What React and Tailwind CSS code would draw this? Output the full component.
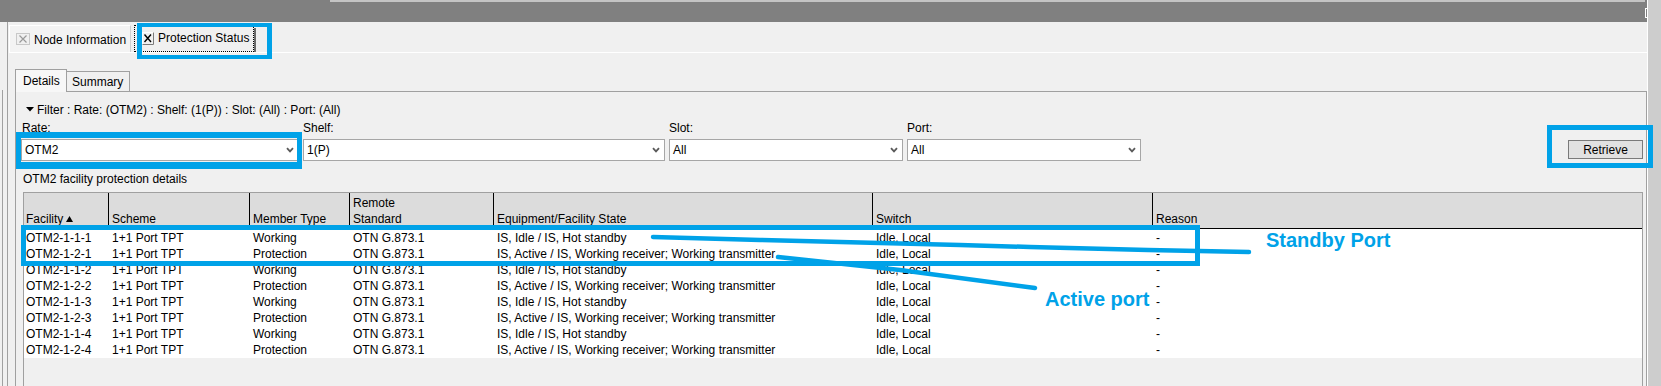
import React from "react";

const rows = [
  ["OTM2-1-1-1", "Working", "IS, Idle / IS, Hot standby"],
  ["OTM2-1-2-1", "Protection", "IS, Active / IS, Working receiver; Working transmitter"],
  ["OTM2-1-1-2", "Working", "IS, Idle / IS, Hot standby"],
  ["OTM2-1-2-2", "Protection", "IS, Active / IS, Working receiver; Working transmitter"],
  ["OTM2-1-1-3", "Working", "IS, Idle / IS, Hot standby"],
  ["OTM2-1-2-3", "Protection", "IS, Active / IS, Working receiver; Working transmitter"],
  ["OTM2-1-1-4", "Working", "IS, Idle / IS, Hot standby"],
  ["OTM2-1-2-4", "Protection", "IS, Active / IS, Working receiver; Working transmitter"],
];

const gridCols = "grid grid-cols-[85px_141px_100px_144px_379px_280px_1fr]";

function Chevron() {
  return (
    <svg width="8" height="6" viewBox="0 0 8 6">
      <path d="M1 1.2L4 4.4L7 1.2" fill="none" stroke="#5a5a5a" strokeWidth="1.8" />
    </svg>
  );
}

function Select({ value, width }) {
  return (
    <div className={`flex items-center h-[22px] bg-white border border-[#a6a6a6] pl-[3px] pr-[4px] ${width}`}>
      <span className="flex-1">{value}</span>
      <Chevron />
    </div>
  );
}

function Field({ label, value, width, labelPad }) {
  return (
    <div className="flex flex-col">
      <div className={`h-[14px] ${labelPad}`}>{label}</div>
      <div className="mt-[4px]">
        <Select value={value} width={width} />
      </div>
    </div>
  );
}

function HeadCell({ children, pad = "pl-[3px]" }) {
  return (
    <div className={`flex items-end border-r border-black h-full pb-[1px] leading-[16px] ${pad}`}>
      <div>{children}</div>
    </div>
  );
}

export default function App() {
  return (
    <div className="relative w-[1661px] h-[386px] overflow-hidden flex bg-[#f0f0f0] text-black text-[12px] leading-[14px] font-['Liberation_Sans',Arial,sans-serif]">
      <div className="flex-1 flex flex-col min-w-0">
        {/* top bar */}
        <div className="h-[22px] bg-[#808080] flex shrink-0">
          <div className="w-[330px]" />
          <div className="flex-1 h-[2px] bg-[#c4c4c4]" />
          <div className="w-[2px] h-[10px] mt-[8px] border-l border-y border-white" />
        </div>

        <div className="flex flex-1 min-h-0">
          {/* left gutter */}
          <div className="w-[9px] flex shrink-0">
            <div className="w-[2px]" />
            <div className="w-[1px] bg-[#a0a0a0] mt-[68px]" />
            <div className="w-[4px]" />
            <div className="w-[1px] bg-[#a0a0a0]" />
          </div>

          <div className="flex-1 flex flex-col min-w-0">
            {/* tab strip */}
            <div className="h-[31px] border-b border-white flex items-end shrink-0">
              <div className="h-[27px] w-[122px] flex items-center pl-[6px] gap-[4px] bg-[#f3f3f3] border-l border-t border-white border-r border-r-[#d0d0d0]">
                <svg width="14" height="12" viewBox="0 0 14 12">
                  <rect x="0.5" y="0.5" width="13" height="11" fill="#f0f0f0" stroke="#c8c8c8" />
                  <path d="M3.5 2.5L10.5 9.5M10.5 2.5L3.5 9.5" stroke="#9a9a9a" strokeWidth="1.2" />
                </svg>
                <span className="mt-[1px]">Node Information</span>
              </div>
              <div className="ml-[3px] h-[27px] w-[120px] flex items-center pl-[7px] gap-[4px] border border-dotted border-black">
                <svg width="12" height="13" viewBox="0 0 12 13">
                  <rect x="0.5" y="0.5" width="11" height="12" fill="#f0f0f0" stroke="#ffffff" />
                  <path d="M11.5 0.5V12.5H0.5" fill="none" stroke="#7a7a7a" />
                  <path d="M2.5 2.5L9 10M9 2.5L2.5 10" stroke="#000" strokeWidth="1.4" />
                </svg>
                <span className="-mt-[2px]">Protection Status</span>
              </div>
              <div className="w-[2px] h-[24px] bg-[#6a6a6a]" />
            </div>

            <div className="flex-1 flex flex-col pl-[6px] pt-[16px] min-h-0">
              {/* sub tabs */}
              <div className="flex items-end h-[22px] shrink-0">
                <div className="h-[23px] w-[52px] bg-[#f7f7f7] border-l border-t border-r border-[#a0a0a0] pl-[7px] pt-[4px] relative z-10 -mb-[1px]">
                  Details
                </div>
                <div className="h-[20px] w-[63px] border-t border-r border-[#a0a0a0] pl-[5px] pt-[3px]">
                  Summary
                </div>
              </div>

              {/* details panel */}
              <div className="flex-1 border-l border-t border-r border-[#a0a0a0] pl-[5px] pr-[3px] flex flex-col">
                <div className="mt-[11px] h-[14px] flex items-center">
                  <svg width="8" height="5" viewBox="0 0 8 5" className="ml-[5px] -mt-[1px]">
                    <path d="M0 0H8L4 4.5Z" fill="#000" />
                  </svg>
                  <span className="ml-[3px]">Filter : Rate: (OTM2) : Shelf: (1(P)) : Slot: (All) : Port: (All)</span>
                </div>

                <div className="mt-[4px] flex items-end">
                  <Field label="Rate:" value="OTM2" width="w-[278px]" labelPad="pl-[1px]" />
                  <div className="ml-[4px]">
                    <Field label="Shelf:" value="1(P)" width="w-[362px]" labelPad="" />
                  </div>
                  <div className="ml-[4px]">
                    <Field label="Slot:" value="All" width="w-[234px]" labelPad="" />
                  </div>
                  <div className="ml-[4px]">
                    <Field label="Port:" value="All" width="w-[234px]" labelPad="" />
                  </div>
                  <button className="ml-auto mb-[2px] w-[75px] h-[19px] bg-[#e1e1e1] border border-[#7a7a7a] text-[12px] leading-[16px]">
                    Retrieve
                  </button>
                </div>

                <div className="mt-[11px] h-[14px] pl-[2px]">OTM2 facility protection details</div>

                {/* table */}
                <div className="mt-[6px] ml-[2px] h-[230px] shrink-0 border border-[#a0a0a0] flex flex-col">
                  <div className={`${gridCols} h-[36px] bg-[#dcdcdc] border-b border-black`}>
                    <HeadCell pad="pl-[2px]">
                      <span className="flex items-center gap-[3px]">
                        Facility
                        <svg width="7" height="6" viewBox="0 0 7 6">
                          <path d="M3.5 0L7 6H0Z" fill="#000" />
                        </svg>
                      </span>
                    </HeadCell>
                    <HeadCell>Scheme</HeadCell>
                    <HeadCell>Member Type</HeadCell>
                    <HeadCell>
                      Remote
                      <br />
                      Standard
                    </HeadCell>
                    <HeadCell>Equipment/Facility State</HeadCell>
                    <HeadCell>Switch</HeadCell>
                    <div className="flex items-end pl-[3px] pb-[1px] leading-[16px]">Reason</div>
                  </div>
                  <div className="bg-white pt-[1px]">
                    {rows.map(([facility, member, state]) => (
                      <div key={facility} className={`${gridCols} h-[16px] leading-[16px]`}>
                        <div className="pl-[2px]">{facility}</div>
                        <div className="pl-[3px]">1+1 Port TPT</div>
                        <div className="pl-[3px]">{member}</div>
                        <div className="pl-[3px]">OTN G.873.1</div>
                        <div className="pl-[3px]">{state}</div>
                        <div className="pl-[3px]">Idle, Local</div>
                        <div className="pl-[3px]">-</div>
                      </div>
                    ))}
                  </div>
                </div>
              </div>
            </div>
          </div>
        </div>
      </div>

      {/* scrollbar strip */}
      <div className="w-[14px] bg-[#cdcdcd] border-l border-white shrink-0" />

      {/* annotations */}
      <div className="absolute inset-0 pointer-events-none">
        <div className="absolute left-[137px] top-[23px] w-[135px] h-[36px] border-x-[5px] border-y-[4px] border-[#00a2e8]" />
        <div className="absolute left-[16px] top-[132px] w-[286px] h-[37px] border-x-[5px] border-t-[6px] border-b-[7px] border-[#00a2e8]" />
        <div className="absolute left-[1547px] top-[125px] w-[106px] h-[43px] border-[5px] border-[#00a2e8]" />
        <div className="absolute left-[21px] top-[225px] w-[1179px] h-[41px] border-[5px] border-[#00a2e8]" />
        <svg className="absolute left-0 top-0" width="1661" height="386" viewBox="0 0 1661 386">
          <polyline
            points="653,237 760,240 880,243 960,245 1030,247 1148,250 1249,252"
            fill="none"
            stroke="#00a2e8"
            strokeWidth="4.5"
            strokeLinecap="round"
            strokeLinejoin="round"
          />
          <polyline
            points="778,257 900,270 1035,288"
            fill="none"
            stroke="#00a2e8"
            strokeWidth="4.5"
            strokeLinecap="round"
            strokeLinejoin="round"
          />
        </svg>
        <div className="absolute left-[1266px] top-[230px] text-[20px] leading-[20px] font-bold text-[#00a2e8]">Standby Port</div>
        <div className="absolute left-[1045px] top-[289px] text-[20px] leading-[20px] font-bold text-[#00a2e8]">Active port</div>
      </div>
    </div>
  );
}
